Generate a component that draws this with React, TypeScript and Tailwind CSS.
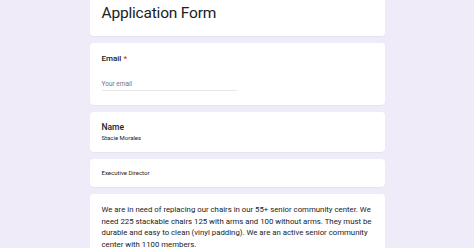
export default function App() {
  const font = { fontFamily: "Roboto, 'Open Sans', sans-serif" };
  return (
    <div className="w-[474px] h-[248px] overflow-hidden bg-[#f0ebf8]" style={font}>
      <div className="mx-auto w-[295px] flex flex-col gap-[7px]">
        <div className="bg-white rounded-b-[4px] h-[36px] px-[12px] shadow-[0_1px_1px_rgba(0,0,0,0.04)]">
          <div className="text-[15.5px] leading-[16px] pt-[5px] tracking-[-0.2px] text-[#202124]">Application Form</div>
        </div>
        <div className="bg-white rounded-[4px] h-[62px] px-[12px] pt-[11px] shadow-[0_1px_1px_rgba(0,0,0,0.04)]">
          <div className="text-[8px] leading-[10px] font-medium text-[#202124]">
            Email <span className="text-[#d93025]">*</span>
          </div>
          <div className="w-[135px] mt-[16px] border-b border-[#e8e8e8] pb-[2px]">
            <div className="text-[6.5px] leading-[8px] text-[#70757a]">Your email</div>
          </div>
        </div>
        <div className="bg-white rounded-[4px] h-[40px] px-[12px] pt-[10px] shadow-[0_1px_1px_rgba(0,0,0,0.04)]">
          <div className="text-[8.5px] leading-[10px] font-medium text-[#202124]">Name</div>
          <div className="text-[6px] leading-[9px] mt-[1px] text-[#202124]">Stacie Morales</div>
        </div>
        <div className="bg-white rounded-[4px] h-[28px] px-[12px] pt-[9px] shadow-[0_1px_1px_rgba(0,0,0,0.04)]">
          <div className="text-[6px] leading-[9px] text-[#202124]">Executive Director</div>
        </div>
        <div className="bg-white rounded-[4px] h-[80px] px-[12px] pt-[10px] shadow-[0_1px_1px_rgba(0,0,0,0.04)]">
          <div className="text-[7.8px] leading-[11.7px] text-[#202124]">
            We are in need of replacing our chairs in our 55+ senior community center. We need 225 stackable chairs 125 with arms and 100 without arms. They must be durable and easy to clean (vinyl padding). We are an active senior community center with 1100 members.
          </div>
        </div>
      </div>
    </div>
  );
}
